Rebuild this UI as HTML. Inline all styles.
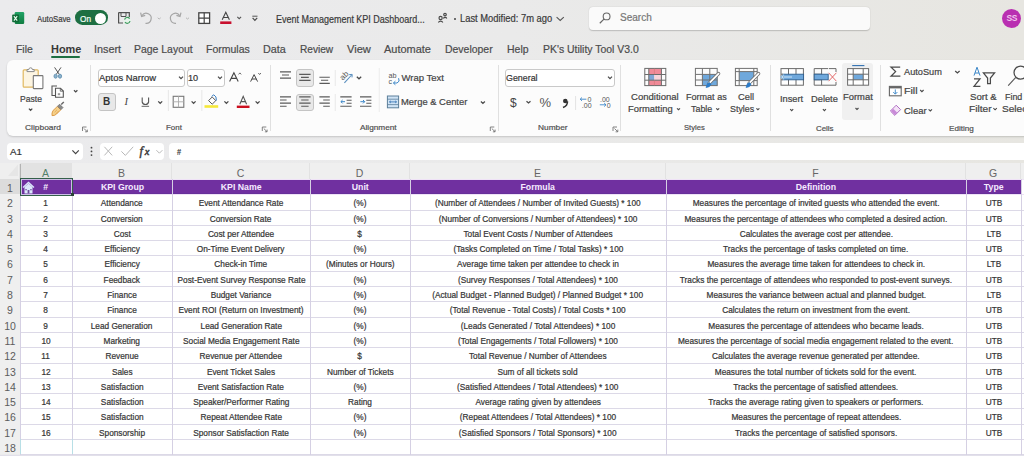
<!DOCTYPE html>
<html><head><meta charset="utf-8">
<style>
*{margin:0;padding:0;box-sizing:border-box}
html,body{width:1024px;height:456px;overflow:hidden;background:linear-gradient(90deg,#ebebed 0%,#eaeaea 50%,#e7e6e1 100%);font-family:"Liberation Sans",sans-serif;color:#333}
.a{position:absolute;white-space:nowrap;transform-origin:0 50%}
svg.a{overflow:visible}
#ribbon{position:absolute;left:6.5px;top:59.8px;width:1030px;height:76px;background:#fcfcfc;border-radius:6px;box-shadow:0 1px 2px rgba(0,0,0,.16)}
.sep{position:absolute;width:1px;background:#e0e0e0}
.box{position:absolute;background:#fff;border:1px solid #c9c9c9;border-radius:3px}
.fb{position:absolute;background:#fff;border-radius:4px}
.colhdr{position:absolute;left:0;width:1024px;background:#efefef}
.gbg{position:absolute;left:20px;top:179px;width:1004px;height:277px;background:#fff}
.ch{position:absolute;text-align:center;font-size:10.5px;color:#666;line-height:20px;border-right:1px solid #e2e2e2}
.ch.sel{background:#e2e2e2;color:#52806a}
.rh{position:absolute;left:0;width:20px;text-align:center;font-size:10.5px;color:#5c5c5c;background:#efefef;line-height:18px}
.rh.sel{background:#dcdcdc}
.c,.hd{position:absolute;text-align:center;font-size:9px;line-height:15px;white-space:nowrap}
.c{background:#fff;color:#333;-webkit-text-stroke:0.22px #3a3a3a}
.hd{background:#7030a0;box-shadow:inset 0 1px #66309a,inset 0 -1px #66309a;color:#f6ebff;font-weight:bold;font-size:9.5px}
.c span{display:inline-block;transform:translateY(1.6px) scaleX(.92)}
.hd span{display:inline-block;transform:translateY(-0.3px) scaleX(.92)}
.hl{position:absolute;left:20px;width:1004px;height:1px;background:#dcd9e7}
.vl{position:absolute;top:179px;width:1px;height:277px;background:#d5d0e3}
</style></head><body>
<!-- title bar shapes -->
<div class="a" style="left:75.1px;top:10.4px;width:33px;height:14.6px;border-radius:7.3px;background:#1d6f42"></div>
<div class="a" style="left:95px;top:13.2px;width:11px;height:11px;border-radius:50%;background:#fff"></div>
<div class="a" style="left:453.5px;top:17.5px;width:2.4px;height:2.4px;border-radius:50%;background:#444"></div>
<div class="a" style="left:589px;top:7px;width:281px;height:23px;background:#fafafa;border-radius:4px;box-shadow:0 0.5px 1.2px rgba(0,0,0,.2)"></div>
<div class="a" style="left:1002.2px;top:8.9px;width:19px;height:19px;border-radius:50%;background:#b92fb1;color:#f0c4ec;font-size:8.5px;font-weight:bold;letter-spacing:-0.4px;text-align:center;line-height:19.5px">SS</div>
<div class="a" style="left:51.2px;top:55.6px;width:29px;height:2.4px;background:#1d6f42;border-radius:1px"></div>
<!-- ribbon -->
<div id="ribbon"></div>
<div class="sep" style="left:90px;top:65px;height:66px"></div>
<div class="sep" style="left:269.5px;top:65px;height:66px"></div>
<div class="sep" style="left:497.5px;top:65px;height:66px"></div>
<div class="sep" style="left:620px;top:65px;height:66px"></div>
<div class="sep" style="left:769.5px;top:65px;height:66px"></div>
<div class="sep" style="left:879.5px;top:65px;height:66px"></div>
<div class="box" style="left:97.6px;top:68.6px;width:87.6px;height:18px"></div>
<div class="box" style="left:187px;top:68.6px;width:37.5px;height:18px"></div>
<div class="box" style="left:504.6px;top:68.5px;width:110px;height:18px"></div>
<div class="a" style="left:97.6px;top:93px;width:18px;height:18.3px;background:#e8e8e8;border:1px solid #c4c4c4;border-radius:3px"></div>
<div class="a" style="left:296px;top:69px;width:17.7px;height:17.5px;background:#e8e8e8;border:1px solid #c4c4c4;border-radius:3px"></div>
<div class="a" style="left:296px;top:93.5px;width:17.7px;height:17.5px;background:#e8e8e8;border:1px solid #c4c4c4;border-radius:3px"></div>
<div class="a" style="left:842.4px;top:63.4px;width:30.4px;height:57px;background:#f0f0f0;border-radius:3px"></div>
<!-- formula bar -->
<div class="fb" style="left:7.4px;top:143.3px;width:75.6px;height:16.4px"></div>
<div class="fb" style="left:100px;top:143.3px;width:63.7px;height:16.4px"></div>
<div class="fb" style="left:169px;top:143.3px;width:860px;height:16.4px"></div>
<!--FBTEXT-->
<svg class="a" style="left:0;top:0" width="1024" height="165" viewBox="0 0 1024 165">
<defs><linearGradient id="xg" x1="0" y1="0" x2="0" y2="1"><stop offset="0" stop-color="#21a366"/><stop offset="1" stop-color="#107c41"/></linearGradient></defs>
<!-- excel logo -->
<rect x="14.7" y="12" width="9.5" height="11.9" rx="1.2" fill="url(#xg)"/>
<rect x="12.2" y="14.6" width="6.8" height="7.6" rx="0.8" fill="#0e6b36"/>
<path d="M13.9 16.2 L17.2 20.6 M17.2 16.2 L13.9 20.6" stroke="#e8fff0" stroke-width="1.1"/>
<!-- save -->
<path d="M118.6 12.6 H129.3 V17 M118.6 12.6 V23 H123" fill="none" stroke="#505050" stroke-width="1.2"/>
<path d="M121 12.6 V16.5 H126 V12.6" fill="none" stroke="#505050" stroke-width="1"/>
<circle cx="127.3" cy="20.3" r="3.6" fill="#e6f3ea"/>
<path d="M124.6 19.6 A2.8 2.8 0 0 1 129.6 18.6 M130 21 A2.8 2.8 0 0 1 125 22.2" fill="none" stroke="#3f9a5e" stroke-width="1.2"/>
<!-- undo / redo -->
<path d="M142 15.6 A5 5 0 1 1 145.5 23.3" fill="none" stroke="#a6a6a6" stroke-width="1.2"/>
<path d="M140.6 12.6 L141.6 16.4 L145.2 15.4" fill="none" stroke="#a6a6a6" stroke-width="1.2"/>
<path d="M157.7 17.8 L159.2 19 L160.7 17.8" fill="none" stroke="#b0b0b0" stroke-width="0.9"/>
<path d="M179.6 15.6 A5 5 0 1 0 176 23.3" fill="none" stroke="#a6a6a6" stroke-width="1.2"/>
<path d="M181 12.6 L180 16.4 L176.4 15.4" fill="none" stroke="#a6a6a6" stroke-width="1.2"/>
<path d="M186 17.8 L187.5 19 L189 17.8" fill="none" stroke="#b0b0b0" stroke-width="0.9"/>
<!-- borders -->
<rect x="198.8" y="12.8" width="10.8" height="10.6" fill="#fff" stroke="#444" stroke-width="1.3"/>
<path d="M204.2 12.8 V23.4 M198.8 18.1 H209.6" stroke="#444" stroke-width="1.2"/>
<!-- font color -->
<path d="M222.2 19.8 L225.8 12.3 L229.4 19.8 M223.4 17.5 H228.2" fill="none" stroke="#444" stroke-width="1.1"/>
<rect x="220.2" y="21.4" width="11.2" height="2.6" fill="#c8102e"/>
<path d="M237.3 16.9 L239.2 18.7 L241.1 16.9" fill="none" stroke="#555" stroke-width="1.1"/>
<!-- customize -->
<path d="M252.3 16.2 H257.5" stroke="#555" stroke-width="1"/>
<path d="M252.6 17.8 L254.9 20.3 L257.2 17.8" fill="none" stroke="#4a4a4a" stroke-width="1.25"/>
<!-- person icon -->
<circle cx="440.6" cy="18" r="1.6" fill="none" stroke="#4a4a4a" stroke-width="1.15"/>
<path d="M438.4 22.5 A2.4 2.4 0 0 1 442.8 22.5" fill="none" stroke="#4a4a4a" stroke-width="1.15"/>
<circle cx="445" cy="14.6" r="1.3" fill="none" stroke="#4a4a4a" stroke-width="1.15"/>
<path d="M443.4 18.4 A1.9 1.9 0 0 1 446.8 18.4" fill="none" stroke="#4a4a4a" stroke-width="1.15"/>
<!-- title chevron -->
<path d="M556.6 17.2 L560.2 20.5 L563.8 17.2" fill="none" stroke="#555" stroke-width="1.1"/>
<!-- search magnifier -->
<circle cx="606.6" cy="16.4" r="3.4" fill="none" stroke="#666" stroke-width="1.1"/>
<path d="M604.2 18.9 L599.8 23.2" stroke="#666" stroke-width="1.2"/>
</svg>
<svg class="a" style="left:0;top:0" width="1024" height="165" viewBox="0 0 1024 165">
<!-- Paste -->
<rect x="23.2" y="69.8" width="15" height="17.4" rx="1" fill="#fdf5e2" stroke="#e0b860" stroke-width="1.2"/>
<path d="M27 71.6 V69.6 H28.8 A1.8 1.8 0 0 1 32.4 69.6 H34.2 V71.6 Z" fill="#fff" stroke="#8a8a8a" stroke-width="1"/>
<rect x="33.3" y="75.6" width="9.6" height="13" rx="0.6" fill="#fff" stroke="#777" stroke-width="1.1"/>
<path d="M28.9 108.6 L30.6 110.3 L32.3 108.6" fill="none" stroke="#4a4a4a" stroke-width="1.25"/>
<!-- scissors -->
<path d="M54.6 67.4 L59.2 74.2 M61 67.4 L56.4 74.2" stroke="#555" stroke-width="1"/>
<ellipse cx="55.6" cy="76.2" rx="1.6" ry="2" fill="#8fb4cc" stroke="#5f8fb0" stroke-width="0.9"/>
<ellipse cx="60" cy="76.2" rx="1.6" ry="2" fill="#8fb4cc" stroke="#5f8fb0" stroke-width="0.9"/>
<!-- copy -->
<path d="M57 86 H52 V95.5 H56" fill="none" stroke="#555" stroke-width="1.1"/>
<path d="M55.5 88.3 H60.5 L63.3 91 V97.2 H55.5 Z" fill="#fff" stroke="#555" stroke-width="1.1"/>
<path d="M60.3 88.3 V91.2 H63.3" fill="none" stroke="#555" stroke-width="0.8"/>
<rect x="57.8" y="93.2" width="2.4" height="2" fill="#999"/>
<path d="M74 90.2 L75.7 91.9 L77.4 90.2" fill="none" stroke="#4a4a4a" stroke-width="1.25"/>
<!-- format painter -->
<path d="M53 110.6 L57.4 106.4 L60.8 109.8 L56.6 114 Q54.4 116 52 115.6 Q51.6 113 53 110.6Z" fill="#f5d08a" stroke="#d9953e" stroke-width="0.9"/>
<path d="M54.6 112.2 L57 109.8 M56 113.6 L58.6 111" stroke="#d9953e" stroke-width="0.6"/>
<path d="M57.6 106.2 L59.6 104.2 L63 107.6 L61 109.6 Z" fill="#8a8a8a" stroke="#666" stroke-width="0.7"/>
<path d="M61.2 104.6 L63.8 102" stroke="#666" stroke-width="1.4"/>
<!-- launcher icons -->
<g fill="none" stroke="#666" stroke-width="0.8">
<path d="M82.5 131 V127 H86.5 M84 128.5 L87.2 131.7 M87.3 129.6 V131.8 H85.1"/>
<path d="M262.3 131 V127 H266.3 M263.8 128.5 L267 131.7 M267.1 129.6 V131.8 H264.9"/>
<path d="M490.3 131 V127 H494.3 M491.8 128.5 L495 131.7 M495.1 129.6 V131.8 H492.9"/>
<path d="M613 131 V127 H617 M614.5 128.5 L617.7 131.7 M617.8 129.6 V131.8 H615.6"/>
</g>
<!-- font box chevrons -->
<g fill="none" stroke="#4a4a4a" stroke-width="1.25">
<path d="M179 76.6 L181 78.6 L183 76.6"/>
<path d="M218 76.6 L220 78.6 L222 76.6"/>
<path d="M608 76.6 L610 78.6 L612 76.6"/>
</g>
<!-- grow/shrink font -->
<path d="M229.6 81.6 L233.9 72.8 L238.2 81.6 M231.2 78.4 H236.6" fill="none" stroke="#444" stroke-width="1.1"/>
<path d="M238.6 74.4 L239.9 72.9 L241.2 74.4" fill="none" stroke="#444" stroke-width="0.8"/>
<path d="M250.6 81.6 L254.1 74.6 L257.6 81.6 M251.9 79 H256.3" fill="none" stroke="#444" stroke-width="1"/>
<path d="M258.3 73 L259.6 74.5 L260.9 73" fill="none" stroke="#444" stroke-width="0.8"/>
<!-- B I U -->
<text x="106.6" y="104.8" font-family="Liberation Sans" font-weight="bold" font-size="10" fill="#333" text-anchor="middle">B</text>
<text x="126.2" y="104.8" font-family="Liberation Serif" font-style="italic" font-size="10.5" fill="#444" text-anchor="middle">I</text>
<path d="M142.2 97.4 V102 A3.3 3.3 0 0 0 148.6 102 V97.4" fill="none" stroke="#555" stroke-width="1.1"/>
<path d="M141.6 106.3 H149.1" stroke="#555" stroke-width="0.9"/>
<path d="M158.2 101.4 L160.2 103.3 L162.2 101.4" fill="none" stroke="#4a4a4a" stroke-width="1.25"/>
<!-- separators in font group -->
<path d="M168.4 90 V111 M201.8 90 V111" stroke="#e2e2e2" stroke-width="0.8"/>
<!-- borders -->
<rect x="173.2" y="96.3" width="10.6" height="11" fill="none" stroke="#777" stroke-width="1.1"/>
<path d="M178.5 96.3 V107.3 M173.2 101.8 H183.8" stroke="#aaa" stroke-width="0.9"/>
<path d="M191.6 101.4 L193.6 103.3 L195.6 101.4" fill="none" stroke="#4a4a4a" stroke-width="1.25"/>
<!-- fill color -->
<path d="M208.6 100.6 L212.2 97 L215.8 100.6 L212.2 104.2 Z" fill="#fff" stroke="#555" stroke-width="1"/>
<path d="M211.6 96.4 L213.8 94.8 Q216.8 96.2 216.4 100.6" fill="none" stroke="#3a7fc4" stroke-width="1"/>
<rect x="204.5" y="105.2" width="13.7" height="2.6" fill="#f5e83a"/>
<path d="M224.4 101.4 L226.4 103.3 L228.4 101.4" fill="none" stroke="#4a4a4a" stroke-width="1.25"/>
<!-- font color A -->
<path d="M239.8 104.2 L243.2 96.4 L246.6 104.2 M241 101.6 H245.4" fill="none" stroke="#555" stroke-width="1.1"/>
<rect x="236.8" y="105.6" width="12.7" height="2.4" fill="#cc1020"/>
<path d="M255.6 101.4 L257.6 103.3 L259.6 101.4" fill="none" stroke="#4a4a4a" stroke-width="1.25"/>
</svg>
<svg class="a" style="left:0;top:0" width="1024" height="165" viewBox="0 0 1024 165">
<g stroke="#5a5a5a" stroke-width="1.1" fill="none">
<!-- top align -->
<path d="M280 71.9 H291 M282 75 H289 M280 78.1 H291"/>
<!-- middle align -->
<path d="M299.2 74.4 H310.6 M301 77.4 H308.8 M299.2 80.4 H310.6"/>
<!-- bottom align -->
<path d="M319.4 77.2 H329.8 M321 80.3 H328.2 M319.4 83.4 H329.8"/>
<!-- left align -->
<path d="M280 96.9 H291 M280 100 H286.6 M280 103.1 H291 M280 106.2 H286.6"/>
<!-- center align -->
<path d="M299.2 96.9 H310.6 M301.2 100 H308.6 M299.2 103.1 H310.6 M301.2 106.2 H308.6"/>
<!-- right align -->
<path d="M319.4 96.9 H329.8 M323.2 100 H329.8 M319.4 103.1 H329.8 M323.2 106.2 H329.8"/>
</g>
<path d="M335.3 70 V86 M335.3 94 V111" stroke="#e4e4e4" stroke-width="0.8"/>
<!-- orientation -->
<text x="344" y="78.4" font-family="Liberation Sans" font-size="8" fill="#555" text-anchor="middle" transform="rotate(-45 344 75.6)">ab</text>
<path d="M344.4 82.8 L351.6 75" stroke="#5a8fbf" stroke-width="1.1"/>
<path d="M349.2 74.6 L352.2 74.4 L352 77.4" fill="none" stroke="#5a8fbf" stroke-width="1"/>
<path d="M356.8 76.7 L359 78.8 L361.2 76.7" fill="none" stroke="#4a4a4a" stroke-width="1.25"/>
<!-- decrease indent -->
<g stroke="#5a5a5a" stroke-width="1.1"><path d="M340.3 96.9 H351.6 M346.6 100.2 H351.6 M346.6 103.2 H351.6 M340.3 106.2 H351.6"/></g>
<path d="M345 101.7 H341 M342.6 100 L340.9 101.7 L342.6 103.4" fill="none" stroke="#3a86c8" stroke-width="1"/>
<!-- increase indent -->
<g stroke="#5a5a5a" stroke-width="1.1"><path d="M360 96.9 H371.4 M366.3 100.2 H371.4 M366.3 103.2 H371.4 M360 106.2 H371.4"/></g>
<path d="M360.4 101.7 H364.6 M363 100 L364.7 101.7 L363 103.4" fill="none" stroke="#3a86c8" stroke-width="1"/>
<!-- wrap text -->
<text x="388.6" y="77.6" font-family="Liberation Sans" font-size="7.2" fill="#555">ab</text>
<text x="388.4" y="84" font-family="Liberation Sans" font-size="7.2" fill="#555">c</text>
<path d="M398.6 78.2 Q400.4 81.6 397 83 H393.6 M395.4 81.2 L393.4 83 L395.4 84.8" fill="none" stroke="#3a86c8" stroke-width="1"/>
<!-- merge & center -->
<rect x="387.4" y="96" width="11.2" height="11.8" fill="#cfe3f5" stroke="#5c7f9a" stroke-width="1"/>
<path d="M387.4 99.2 H398.6 M387.4 104.6 H398.6" stroke="#5c7f9a" stroke-width="0.8"/>
<path d="M389.5 101.9 H396.5 M390.8 100.9 L389.5 101.9 L390.8 102.9 M395.2 100.9 L396.5 101.9 L395.2 102.9" fill="none" stroke="#2f6fb0" stroke-width="0.8"/>
<path d="M480.9 101.5 L482.9 103.4 L484.9 101.5" fill="none" stroke="#4a4a4a" stroke-width="1.25"/>
<!-- number -->
<text x="513.4" y="106.6" font-family="Liberation Sans" font-size="12" fill="#444" text-anchor="middle">$</text>
<path d="M526.5 101.2 L528.5 103 L530.5 101.2" fill="none" stroke="#4a4a4a" stroke-width="1.25"/>
<text x="545.2" y="107.4" font-family="Liberation Sans" font-size="13" fill="#555" text-anchor="middle">%</text>
<circle cx="565.3" cy="101" r="2.3" fill="#333"/>
<path d="M567.4 101.4 Q567.8 105.6 563 107.6" fill="none" stroke="#333" stroke-width="1.6"/>
<path d="M379.3 68 V112" stroke="#e8e8e8" stroke-width="0.8"/>
<path d="M575.6 96 V110" stroke="#dcdcdc" stroke-width="0.8"/>
<!-- decrease decimal -->
<path d="M586.4 99.2 H580.2 M582 97.5 L580.2 99.2 L582 100.9" fill="none" stroke="#3a86c8" stroke-width="0.9"/>
<text x="587.6" y="101.8" font-family="Liberation Sans" font-size="7" fill="#555">0</text>
<text x="581.8" y="108" font-family="Liberation Sans" font-size="7" fill="#555">.00</text>
<!-- increase decimal -->
<text x="600" y="101.8" font-family="Liberation Sans" font-size="7" fill="#555">.00</text>
<path d="M599.8 104.8 H606 M604.2 103.1 L606 104.8 L604.2 106.5" fill="none" stroke="#3a86c8" stroke-width="0.9"/>
<text x="606.8" y="108" font-family="Liberation Sans" font-size="7" fill="#555">0</text>
</svg>
<svg class="a" style="left:0;top:0" width="1024" height="165" viewBox="0 0 1024 165">
<!-- conditional formatting -->
<rect x="648.8" y="68.6" width="12.6" height="5.9" fill="#f08a98"/>
<rect x="648.8" y="74.5" width="5.6" height="5.7" fill="#7ea6d6"/>
<rect x="654.4" y="74.5" width="7" height="5.7" fill="#f9d4da"/>
<rect x="648.8" y="80.2" width="12.6" height="5.5" fill="#f08a98"/>
<g fill="none" stroke="#6b6b6b" stroke-width="1">
<rect x="644.8" y="68.4" width="21" height="17.2"/>
<path d="M648.8 68.4 V85.6 M661.4 68.4 V85.6 M644.8 74.5 H665.8 M644.8 80.2 H665.8"/>
</g>
<path d="M654.4 68.4 V74.5 M654.4 80.2 V85.6" stroke="#c77" stroke-width="0.6"/>
<!-- format as table -->
<rect x="702.4" y="74.4" width="15" height="11.2" fill="#6fa8dc"/>
<g fill="none" stroke="#707070" stroke-width="1">
<rect x="695.4" y="68.4" width="21.8" height="17.2"/>
<path d="M702.4 68.4 V85.6 M709.8 68.4 V85.6 M695.4 74.4 H717.2 M695.4 80 H717.2"/>
</g>
<path d="M718.6 73.6 L709 83.4" stroke="#6c6c6c" stroke-width="3.4" stroke-linecap="round"/>
<path d="M718.6 73.6 L709 83.4" stroke="#fff" stroke-width="1.8" stroke-linecap="round"/>
<path d="M709.6 82.6 Q706.6 83.2 706 87.6 Q710 87.4 711 84.2Z" fill="#2b7bc8" stroke="#2b7bc8" stroke-width="0.6"/>
<!-- cell styles -->
<rect x="739.2" y="71.6" width="14.6" height="9" fill="#6fa8dc"/>
<g fill="none" stroke="#707070" stroke-width="1">
<rect x="735.4" y="68.4" width="21.8" height="17.2"/>
<path d="M739.2 68.4 V85.6 M753.8 68.4 V85.6 M735.4 71.6 H757.2 M735.4 80.6 H757.2"/>
</g>
<path d="M758.6 73.6 L749 83.4" stroke="#6c6c6c" stroke-width="3.4" stroke-linecap="round"/>
<path d="M758.6 73.6 L749 83.4" stroke="#fff" stroke-width="1.8" stroke-linecap="round"/>
<path d="M749.6 82.6 Q746.6 83.2 746 87.6 Q750 87.4 751 84.2Z" fill="#2b7bc8" stroke="#2b7bc8" stroke-width="0.6"/>
<!-- styles chevrons -->
<g fill="none" stroke="#4a4a4a" stroke-width="1.15">
<path d="M677 108.3 L678.5 109.7 L680 108.3"/>
<path d="M716.2 108.3 L717.7 109.7 L719.2 108.3"/>
<path d="M756.4 108.3 L757.9 109.7 L759.4 108.3"/>
</g>
<!-- insert cells -->
<rect x="781" y="68.6" width="22.4" height="16.6" fill="#fff" stroke="#6b6b6b" stroke-width="1"/>
<path d="M788.5 68.6 V85.2 M796 68.6 V85.2" stroke="#6b6b6b" stroke-width="1"/>
<rect x="783" y="74.2" width="20.6" height="5.6" fill="#6fa8dc" stroke="#2f5f8f" stroke-width="0.9"/>
<path d="M781 74.2 H783 M781 79.8 H783" stroke="#6b6b6b"/>
<path d="M792 77 H781.2 M784 74.6 L781 77 L784 79.4" fill="none" stroke="#cfe6f8" stroke-width="1.2"/>
<path d="M784.2 74.2 L780.6 77 L784.2 79.8" fill="none" stroke="#5a9ad0" stroke-width="0.7"/>
<!-- delete cells -->
<path d="M828.2 68.6 H814.2 V85.2 H829 M814.2 74.2 H822 M814.2 79.8 H822" fill="none" stroke="#6b6b6b" stroke-width="1"/>
<path d="M821.6 68.6 V85.2 M829 68.6 H836 V72 M836 82 V85.2 H829" fill="none" stroke="#6b6b6b" stroke-width="1"/>
<rect x="814.2" y="74.2" width="14" height="5.6" fill="#6fa8dc" stroke="#2f5f8f" stroke-width="0.9"/>
<path d="M828.6 72.8 L836.4 81.2 M836.4 72.8 L828.6 81.2" stroke="#e05a5a" stroke-width="0.9"/>
<!-- format cells -->
<rect x="847.6" y="68.6" width="21" height="16.6" fill="#fff" stroke="#6b6b6b" stroke-width="1"/>
<rect x="853.2" y="74.2" width="10" height="5.6" fill="#6fa8dc"/>
<path d="M853.2 68.6 V85.2 M863.2 68.6 V85.2 M847.6 74.2 H868.6 M847.6 79.8 H868.6" stroke="#6b6b6b" stroke-width="1"/>
<path d="M852.2 65.6 H864.4" stroke="#2f6fb0" stroke-width="1.1"/>
<g fill="none" stroke="#4a4a4a" stroke-width="1.15">
<path d="M790.2 109.2 L791.7 110.6 L793.2 109.2"/>
<path d="M822.9 109.2 L824.4 110.6 L825.9 109.2"/>
<path d="M855.5 108 L857 109.4 L858.5 108"/>
</g>
<!-- autosum -->
<path d="M900.2 67.2 H891 L895.6 71.6 L891 76.2 H900.4" fill="none" stroke="#4a4a4a" stroke-width="1.25"/>
<path d="M955.2 71 L957.4 73 L959.6 71" fill="none" stroke="#4a4a4a" stroke-width="1.25"/>
<!-- fill -->
<rect x="889.4" y="86.4" width="11.8" height="9.4" fill="#fff" stroke="#666" stroke-width="1.1"/>
<path d="M889.4 87.6 H901.2" stroke="#666" stroke-width="1.6"/>
<path d="M895.3 89.4 V94 M893.2 92 L895.3 94.2 L897.4 92" fill="none" stroke="#3a86c8" stroke-width="0.9"/>
<path d="M920.2 90 L921.9 91.6 L923.6 90" fill="none" stroke="#4a4a4a" stroke-width="1.15"/>
<!-- clear -->
<path d="M890.4 111 L896.2 105.2 L900.6 109.6 L894.8 115.4 Z" fill="#f3e2f6" stroke="#b070c4" stroke-width="1"/>
<path d="M890.9 111 L893.2 108.7 L897.1 112.6 L894.8 114.9 Z" fill="#c98ad8"/>
<path d="M928.6 109.3 L930.3 110.9 L932 109.3" fill="none" stroke="#4a4a4a" stroke-width="1.15"/>
<!-- sort & filter -->
<path d="M974 75.6 L977 67.2 L980 75.6 M975 73 H979" fill="none" stroke="#3a86c8" stroke-width="1"/>
<path d="M974 78.8 H980 L974 86.4 H980.4" fill="none" stroke="#4a4a4a" stroke-width="1.25"/>
<path d="M983.4 72.8 H994.6 L990.4 78 V83.6 L987.6 83.6 V78 Z" fill="none" stroke="#4a4a4a" stroke-width="1.25"/>
<path d="M993.4 108.2 L995.1 109.8 L996.8 108.2" fill="none" stroke="#4a4a4a" stroke-width="1.15"/>
<!-- find -->
<circle cx="1020.6" cy="72.6" r="6.6" fill="none" stroke="#4a4a4a" stroke-width="1.25"/>
<path d="M1015.8 77.4 L1008.2 85.6" stroke="#555" stroke-width="1.1"/>
</svg>
<svg class="a" style="left:0;top:0" width="1024" height="165" viewBox="0 0 1024 165">
<path d="M72.4 150.4 L75.6 153.6 L78.8 150.4" fill="none" stroke="#444" stroke-width="1.2"/>
<circle cx="91.5" cy="147.7" r="0.9" fill="#444"/><circle cx="91.5" cy="151.4" r="0.9" fill="#444"/><circle cx="91.5" cy="155.1" r="0.9" fill="#444"/>
<path d="M104.4 146.8 L112.2 155.4 M112.2 146.8 L104.4 155.4" stroke="#b8b8b8" stroke-width="1"/>
<path d="M121.4 151.4 L125.4 155.4 L133.2 146.8" fill="none" stroke="#b8b8b8" stroke-width="1"/>
<text x="139.6" y="155" font-family="Liberation Serif" font-style="italic" font-size="12.5" fill="#3a3a3a" stroke="#3a3a3a" stroke-width="0.45">f</text>
<text x="144.8" y="155" font-family="Liberation Serif" font-style="italic" font-size="10.5" fill="#3a3a3a" stroke="#3a3a3a" stroke-width="0.45">x</text>
<path d="M156.4 150.2 L159.4 153.2 L162.4 150.2" fill="none" stroke="#b0b0b0" stroke-width="0.9"/>
</svg>

<div class="a" style="left:36.83px;top:11.70px;line-height:14px;font-size:8.5px;color:#3c3c3c;font-weight:normal;transform:scaleX(0.914);-webkit-text-stroke:0.2px currentColor">AutoSave</div>
<div class="a" style="left:80.11px;top:11.70px;line-height:14px;font-size:9px;color:#f4fff8;font-weight:normal;transform:scaleX(0.914);-webkit-text-stroke:0.2px currentColor">On</div>
<div class="a" style="left:276.26px;top:12.60px;line-height:14px;font-size:10px;color:#3a3a3a;font-weight:normal;transform:scaleX(0.898);-webkit-text-stroke:0.2px currentColor">Event Management KPI Dashboard...</div>
<div class="a" style="left:460.44px;top:12.40px;line-height:14px;font-size:10px;color:#3a3a3a;font-weight:normal;transform:scaleX(0.937);-webkit-text-stroke:0.2px currentColor">Last Modified: 7m ago</div>
<div class="a" style="left:619.80px;top:10.80px;line-height:14px;font-size:10px;color:#777777;font-weight:normal;transform:scaleX(1.004);-webkit-text-stroke:0.2px currentColor">Search</div>
<div class="a" style="left:15.78px;top:42.00px;line-height:14px;font-size:10.5px;color:#4c4c4c;font-weight:normal;transform:scaleX(0.990);-webkit-text-stroke:0.2px currentColor">File</div>
<div class="a" style="left:50.54px;top:42.00px;line-height:14px;font-size:10.5px;color:#383838;font-weight:bold;transform:scaleX(1.040)">Home</div>
<div class="a" style="left:93.75px;top:42.00px;line-height:14px;font-size:10.5px;color:#4c4c4c;font-weight:normal;transform:scaleX(1.030);-webkit-text-stroke:0.2px currentColor">Insert</div>
<div class="a" style="left:134.37px;top:42.00px;line-height:14px;font-size:10.5px;color:#4c4c4c;font-weight:normal;transform:scaleX(0.995);-webkit-text-stroke:0.2px currentColor">Page Layout</div>
<div class="a" style="left:205.97px;top:42.00px;line-height:14px;font-size:10.5px;color:#4c4c4c;font-weight:normal;transform:scaleX(1.000);-webkit-text-stroke:0.2px currentColor">Formulas</div>
<div class="a" style="left:263.35px;top:42.00px;line-height:14px;font-size:10.5px;color:#4c4c4c;font-weight:normal;transform:scaleX(1.026);-webkit-text-stroke:0.2px currentColor">Data</div>
<div class="a" style="left:300.39px;top:42.00px;line-height:14px;font-size:10.5px;color:#4c4c4c;font-weight:normal;transform:scaleX(0.963);-webkit-text-stroke:0.2px currentColor">Review</div>
<div class="a" style="left:347.03px;top:42.00px;line-height:14px;font-size:10.5px;color:#4c4c4c;font-weight:normal;transform:scaleX(1.057);-webkit-text-stroke:0.2px currentColor">View</div>
<div class="a" style="left:384.14px;top:42.00px;line-height:14px;font-size:10.5px;color:#4c4c4c;font-weight:normal;transform:scaleX(1.045);-webkit-text-stroke:0.2px currentColor">Automate</div>
<div class="a" style="left:444.77px;top:42.00px;line-height:14px;font-size:10.5px;color:#4c4c4c;font-weight:normal;transform:scaleX(0.996);-webkit-text-stroke:0.2px currentColor">Developer</div>
<div class="a" style="left:506.57px;top:42.00px;line-height:14px;font-size:10.5px;color:#4c4c4c;font-weight:normal;transform:scaleX(0.998);-webkit-text-stroke:0.2px currentColor">Help</div>
<div class="a" style="left:542.67px;top:42.00px;line-height:14px;font-size:10.5px;color:#4c4c4c;font-weight:normal;transform:scaleX(0.994);-webkit-text-stroke:0.2px currentColor">PK's Utility Tool V3.0</div>
<div class="a" style="left:25.30px;top:121.00px;line-height:14px;font-size:8px;color:#505050;font-weight:normal;transform:scaleX(1.050);-webkit-text-stroke:0.2px currentColor">Clipboard</div>
<div class="a" style="left:166.12px;top:121.00px;line-height:14px;font-size:8px;color:#505050;font-weight:normal;transform:scaleX(0.990);-webkit-text-stroke:0.2px currentColor">Font</div>
<div class="a" style="left:359.51px;top:121.00px;line-height:14px;font-size:8px;color:#505050;font-weight:normal;transform:scaleX(1.030);-webkit-text-stroke:0.2px currentColor">Alignment</div>
<div class="a" style="left:538.10px;top:121.00px;line-height:14px;font-size:8px;color:#505050;font-weight:normal;transform:scaleX(1.039);-webkit-text-stroke:0.2px currentColor">Number</div>
<div class="a" style="left:684.44px;top:121.30px;line-height:14px;font-size:8px;color:#505050;font-weight:normal;transform:scaleX(0.952);-webkit-text-stroke:0.2px currentColor">Styles</div>
<div class="a" style="left:816.13px;top:121.50px;line-height:14px;font-size:8px;color:#505050;font-weight:normal;transform:scaleX(0.988);-webkit-text-stroke:0.2px currentColor">Cells</div>
<div class="a" style="left:949.11px;top:121.50px;line-height:14px;font-size:8px;color:#505050;font-weight:normal;transform:scaleX(1.016);-webkit-text-stroke:0.2px currentColor">Editing</div>
<div class="a" style="left:20.09px;top:91.70px;line-height:14px;font-size:9px;color:#444;font-weight:normal;transform:scaleX(0.951);-webkit-text-stroke:0.2px currentColor">Paste</div>
<div class="a" style="left:98.93px;top:70.60px;line-height:14px;font-size:9.5px;color:#333;font-weight:normal;transform:scaleX(0.993);-webkit-text-stroke:0.2px currentColor">Aptos Narrow</div>
<div class="a" style="left:188.45px;top:70.60px;line-height:14px;font-size:9.5px;color:#333;font-weight:normal;transform:scaleX(0.959);-webkit-text-stroke:0.2px currentColor">10</div>
<div class="a" style="left:401.43px;top:71.30px;line-height:14px;font-size:9.5px;color:#444;font-weight:normal;transform:scaleX(1.000);-webkit-text-stroke:0.2px currentColor">Wrap Text</div>
<div class="a" style="left:401.44px;top:95.40px;line-height:14px;font-size:9.5px;color:#444;font-weight:normal;transform:scaleX(0.989);-webkit-text-stroke:0.2px currentColor">Merge &amp; Center</div>
<div class="a" style="left:506.47px;top:70.50px;line-height:14px;font-size:9.5px;color:#333;font-weight:normal;transform:scaleX(0.933);-webkit-text-stroke:0.2px currentColor">General</div>
<div class="a" style="left:631.13px;top:90.20px;line-height:14px;font-size:9px;color:#444;font-weight:normal;transform:scaleX(1.059);-webkit-text-stroke:0.2px currentColor">Conditional</div>
<div class="a" style="left:628.24px;top:102.20px;line-height:14px;font-size:9px;color:#444;font-weight:normal;transform:scaleX(1.039);-webkit-text-stroke:0.2px currentColor">Formatting</div>
<div class="a" style="left:685.66px;top:90.20px;line-height:14px;font-size:9px;color:#444;font-weight:normal;transform:scaleX(1.004);-webkit-text-stroke:0.2px currentColor">Format as</div>
<div class="a" style="left:691.27px;top:102.20px;line-height:14px;font-size:9px;color:#444;font-weight:normal;transform:scaleX(0.989);-webkit-text-stroke:0.2px currentColor">Table</div>
<div class="a" style="left:738.04px;top:90.20px;line-height:14px;font-size:9px;color:#444;font-weight:normal;transform:scaleX(1.036);-webkit-text-stroke:0.2px currentColor">Cell</div>
<div class="a" style="left:729.67px;top:102.20px;line-height:14px;font-size:9px;color:#444;font-weight:normal;transform:scaleX(0.986);-webkit-text-stroke:0.2px currentColor">Styles</div>
<div class="a" style="left:780.14px;top:91.80px;line-height:14px;font-size:9px;color:#444;font-weight:normal;transform:scaleX(1.030);-webkit-text-stroke:0.2px currentColor">Insert</div>
<div class="a" style="left:811.44px;top:91.80px;line-height:14px;font-size:9px;color:#444;font-weight:normal;transform:scaleX(1.033);-webkit-text-stroke:0.2px currentColor">Delete</div>
<div class="a" style="left:842.74px;top:90.00px;line-height:14px;font-size:9px;color:#444;font-weight:normal;transform:scaleX(1.044);-webkit-text-stroke:0.2px currentColor">Format</div>
<div class="a" style="left:903.95px;top:65.20px;line-height:14px;font-size:9px;color:#444;font-weight:normal;transform:scaleX(1.023);-webkit-text-stroke:0.2px currentColor">AutoSum</div>
<div class="a" style="left:903.86px;top:84.40px;line-height:14px;font-size:9px;color:#444;font-weight:normal;transform:scaleX(1.181);-webkit-text-stroke:0.2px currentColor">Fill</div>
<div class="a" style="left:903.93px;top:103.90px;line-height:14px;font-size:9px;color:#444;font-weight:normal;transform:scaleX(1.049);-webkit-text-stroke:0.2px currentColor">Clear</div>
<div class="a" style="left:970.22px;top:90.40px;line-height:14px;font-size:9px;color:#444;font-weight:normal;transform:scaleX(1.071);-webkit-text-stroke:0.2px currentColor">Sort &amp;</div>
<div class="a" style="left:968.89px;top:102.40px;line-height:14px;font-size:9px;color:#444;font-weight:normal;transform:scaleX(1.129);-webkit-text-stroke:0.2px currentColor">Filter</div>
<div class="a" style="left:1005.27px;top:90.40px;line-height:14px;font-size:9px;color:#444;font-weight:normal;transform:scaleX(0.987);-webkit-text-stroke:0.2px currentColor">Find</div>
<div class="a" style="left:1002.39px;top:102.40px;line-height:14px;font-size:9px;color:#444;font-weight:normal;transform:scaleX(1.122);-webkit-text-stroke:0.2px currentColor">Select</div>
<div class="a" style="left:10.11px;top:144.50px;line-height:14px;font-size:9.5px;color:#333;font-weight:normal;transform:scaleX(1.027);-webkit-text-stroke:0.2px currentColor">A1</div>
<div class="a" style="left:176.56px;top:144.50px;line-height:14px;font-size:9px;color:#333;font-weight:normal;transform:scaleX(0.813);-webkit-text-stroke:0.2px currentColor">#</div>
<div id="grid">
<div class="gbg"></div>
<div class="colhdr" style="top:163.3px;height:15.659999999999997px"></div>
<div class="ch sel" style="left:20px;width:52px;top:163.3px;height:15.659999999999997px">A</div>
<div class="ch" style="left:72px;width:100px;top:163.3px;height:15.659999999999997px">B</div>
<div class="ch" style="left:172px;width:138px;top:163.3px;height:15.659999999999997px">C</div>
<div class="ch" style="left:310px;width:100px;top:163.3px;height:15.659999999999997px">D</div>
<div class="ch" style="left:410px;width:256px;top:163.3px;height:15.659999999999997px">E</div>
<div class="ch" style="left:666px;width:300px;top:163.3px;height:15.659999999999997px">F</div>
<div class="ch" style="left:966px;width:55px;top:163.3px;height:15.659999999999997px">G</div>
<div class="rh sel" style="top:178.96px;height:15.30px">1</div>
<div class="hd" style="left:20px;width:52px;top:178.96px;height:15.30px"><span>#</span></div>
<div class="hd" style="left:72px;width:100px;top:178.96px;height:15.30px"><span>KPI Group</span></div>
<div class="hd" style="left:172px;width:138px;top:178.96px;height:15.30px"><span>KPI Name</span></div>
<div class="hd" style="left:310px;width:100px;top:178.96px;height:15.30px"><span>Unit</span></div>
<div class="hd" style="left:410px;width:256px;top:178.96px;height:15.30px"><span>Formula</span></div>
<div class="hd" style="left:666px;width:300px;top:178.96px;height:15.30px"><span>Definition</span></div>
<div class="hd" style="left:966px;width:55px;top:178.96px;height:15.30px"><span>Type</span></div>
<div class="rh" style="top:194.26px;height:15.30px">2</div>
<div class="c" style="left:20px;width:52px;top:194.26px;height:15.30px"><span>1</span></div>
<div class="c" style="left:72px;width:100px;top:194.26px;height:15.30px"><span>Attendance</span></div>
<div class="c" style="left:172px;width:138px;top:194.26px;height:15.30px"><span>Event Attendance Rate</span></div>
<div class="c" style="left:310px;width:100px;top:194.26px;height:15.30px"><span>(%)</span></div>
<div class="c" style="left:410px;width:256px;top:194.26px;height:15.30px"><span>(Number of Attendees / Number of Invited Guests) * 100</span></div>
<div class="c" style="left:666px;width:300px;top:194.26px;height:15.30px"><span>Measures the percentage of invited guests who attended the event.</span></div>
<div class="c" style="left:966px;width:55px;top:194.26px;height:15.30px"><span>UTB</span></div>
<div class="rh" style="top:209.55px;height:15.30px">3</div>
<div class="c" style="left:20px;width:52px;top:209.55px;height:15.30px"><span>2</span></div>
<div class="c" style="left:72px;width:100px;top:209.55px;height:15.30px"><span>Conversion</span></div>
<div class="c" style="left:172px;width:138px;top:209.55px;height:15.30px"><span>Conversion Rate</span></div>
<div class="c" style="left:310px;width:100px;top:209.55px;height:15.30px"><span>(%)</span></div>
<div class="c" style="left:410px;width:256px;top:209.55px;height:15.30px"><span>(Number of Conversions / Number of Attendees) * 100</span></div>
<div class="c" style="left:666px;width:300px;top:209.55px;height:15.30px"><span>Measures the percentage of attendees who completed a desired action.</span></div>
<div class="c" style="left:966px;width:55px;top:209.55px;height:15.30px"><span>UTB</span></div>
<div class="rh" style="top:224.85px;height:15.30px">4</div>
<div class="c" style="left:20px;width:52px;top:224.85px;height:15.30px"><span>3</span></div>
<div class="c" style="left:72px;width:100px;top:224.85px;height:15.30px"><span>Cost</span></div>
<div class="c" style="left:172px;width:138px;top:224.85px;height:15.30px"><span>Cost per Attendee</span></div>
<div class="c" style="left:310px;width:100px;top:224.85px;height:15.30px"><span>$</span></div>
<div class="c" style="left:410px;width:256px;top:224.85px;height:15.30px"><span>Total Event Costs / Number of Attendees</span></div>
<div class="c" style="left:666px;width:300px;top:224.85px;height:15.30px"><span>Calculates the average cost per attendee.</span></div>
<div class="c" style="left:966px;width:55px;top:224.85px;height:15.30px"><span>LTB</span></div>
<div class="rh" style="top:240.14px;height:15.30px">5</div>
<div class="c" style="left:20px;width:52px;top:240.14px;height:15.30px"><span>4</span></div>
<div class="c" style="left:72px;width:100px;top:240.14px;height:15.30px"><span>Efficiency</span></div>
<div class="c" style="left:172px;width:138px;top:240.14px;height:15.30px"><span>On-Time Event Delivery</span></div>
<div class="c" style="left:310px;width:100px;top:240.14px;height:15.30px"><span>(%)</span></div>
<div class="c" style="left:410px;width:256px;top:240.14px;height:15.30px"><span>(Tasks Completed on Time / Total Tasks) * 100</span></div>
<div class="c" style="left:666px;width:300px;top:240.14px;height:15.30px"><span>Tracks the percentage of tasks completed on time.</span></div>
<div class="c" style="left:966px;width:55px;top:240.14px;height:15.30px"><span>UTB</span></div>
<div class="rh" style="top:255.44px;height:15.30px">6</div>
<div class="c" style="left:20px;width:52px;top:255.44px;height:15.30px"><span>5</span></div>
<div class="c" style="left:72px;width:100px;top:255.44px;height:15.30px"><span>Efficiency</span></div>
<div class="c" style="left:172px;width:138px;top:255.44px;height:15.30px"><span>Check-in Time</span></div>
<div class="c" style="left:310px;width:100px;top:255.44px;height:15.30px"><span>(Minutes or Hours)</span></div>
<div class="c" style="left:410px;width:256px;top:255.44px;height:15.30px"><span>Average time taken per attendee to check in</span></div>
<div class="c" style="left:666px;width:300px;top:255.44px;height:15.30px"><span>Measures the average time taken for attendees to check in.</span></div>
<div class="c" style="left:966px;width:55px;top:255.44px;height:15.30px"><span>LTB</span></div>
<div class="rh" style="top:270.74px;height:15.30px">7</div>
<div class="c" style="left:20px;width:52px;top:270.74px;height:15.30px"><span>6</span></div>
<div class="c" style="left:72px;width:100px;top:270.74px;height:15.30px"><span>Feedback</span></div>
<div class="c" style="left:172px;width:138px;top:270.74px;height:15.30px"><span>Post-Event Survey Response Rate</span></div>
<div class="c" style="left:310px;width:100px;top:270.74px;height:15.30px"><span>(%)</span></div>
<div class="c" style="left:410px;width:256px;top:270.74px;height:15.30px"><span>(Survey Responses / Total Attendees) * 100</span></div>
<div class="c" style="left:666px;width:300px;top:270.74px;height:15.30px"><span>Tracks the percentage of attendees who responded to post-event surveys.</span></div>
<div class="c" style="left:966px;width:55px;top:270.74px;height:15.30px"><span>UTB</span></div>
<div class="rh" style="top:286.03px;height:15.30px">8</div>
<div class="c" style="left:20px;width:52px;top:286.03px;height:15.30px"><span>7</span></div>
<div class="c" style="left:72px;width:100px;top:286.03px;height:15.30px"><span>Finance</span></div>
<div class="c" style="left:172px;width:138px;top:286.03px;height:15.30px"><span>Budget Variance</span></div>
<div class="c" style="left:310px;width:100px;top:286.03px;height:15.30px"><span>(%)</span></div>
<div class="c" style="left:410px;width:256px;top:286.03px;height:15.30px"><span>(Actual Budget - Planned Budget) / Planned Budget * 100</span></div>
<div class="c" style="left:666px;width:300px;top:286.03px;height:15.30px"><span>Measures the variance between actual and planned budget.</span></div>
<div class="c" style="left:966px;width:55px;top:286.03px;height:15.30px"><span>LTB</span></div>
<div class="rh" style="top:301.33px;height:15.30px">9</div>
<div class="c" style="left:20px;width:52px;top:301.33px;height:15.30px"><span>8</span></div>
<div class="c" style="left:72px;width:100px;top:301.33px;height:15.30px"><span>Finance</span></div>
<div class="c" style="left:172px;width:138px;top:301.33px;height:15.30px"><span>Event ROI (Return on Investment)</span></div>
<div class="c" style="left:310px;width:100px;top:301.33px;height:15.30px"><span>(%)</span></div>
<div class="c" style="left:410px;width:256px;top:301.33px;height:15.30px"><span>(Total Revenue - Total Costs) / Total Costs * 100</span></div>
<div class="c" style="left:666px;width:300px;top:301.33px;height:15.30px"><span>Calculates the return on investment from the event.</span></div>
<div class="c" style="left:966px;width:55px;top:301.33px;height:15.30px"><span>UTB</span></div>
<div class="rh" style="top:316.62px;height:15.30px">10</div>
<div class="c" style="left:20px;width:52px;top:316.62px;height:15.30px"><span>9</span></div>
<div class="c" style="left:72px;width:100px;top:316.62px;height:15.30px"><span>Lead Generation</span></div>
<div class="c" style="left:172px;width:138px;top:316.62px;height:15.30px"><span>Lead Generation Rate</span></div>
<div class="c" style="left:310px;width:100px;top:316.62px;height:15.30px"><span>(%)</span></div>
<div class="c" style="left:410px;width:256px;top:316.62px;height:15.30px"><span>(Leads Generated / Total Attendees) * 100</span></div>
<div class="c" style="left:666px;width:300px;top:316.62px;height:15.30px"><span>Measures the percentage of attendees who became leads.</span></div>
<div class="c" style="left:966px;width:55px;top:316.62px;height:15.30px"><span>UTB</span></div>
<div class="rh" style="top:331.92px;height:15.30px">11</div>
<div class="c" style="left:20px;width:52px;top:331.92px;height:15.30px"><span>10</span></div>
<div class="c" style="left:72px;width:100px;top:331.92px;height:15.30px"><span>Marketing</span></div>
<div class="c" style="left:172px;width:138px;top:331.92px;height:15.30px"><span>Social Media Engagement Rate</span></div>
<div class="c" style="left:310px;width:100px;top:331.92px;height:15.30px"><span>(%)</span></div>
<div class="c" style="left:410px;width:256px;top:331.92px;height:15.30px"><span>(Total Engagements / Total Followers) * 100</span></div>
<div class="c" style="left:666px;width:300px;top:331.92px;height:15.30px"><span>Measures the percentage of social media engagement related to the event.</span></div>
<div class="c" style="left:966px;width:55px;top:331.92px;height:15.30px"><span>UTB</span></div>
<div class="rh" style="top:347.22px;height:15.30px">12</div>
<div class="c" style="left:20px;width:52px;top:347.22px;height:15.30px"><span>11</span></div>
<div class="c" style="left:72px;width:100px;top:347.22px;height:15.30px"><span>Revenue</span></div>
<div class="c" style="left:172px;width:138px;top:347.22px;height:15.30px"><span>Revenue per Attendee</span></div>
<div class="c" style="left:310px;width:100px;top:347.22px;height:15.30px"><span>$</span></div>
<div class="c" style="left:410px;width:256px;top:347.22px;height:15.30px"><span>Total Revenue / Number of Attendees</span></div>
<div class="c" style="left:666px;width:300px;top:347.22px;height:15.30px"><span>Calculates the average revenue generated per attendee.</span></div>
<div class="c" style="left:966px;width:55px;top:347.22px;height:15.30px"><span>UTB</span></div>
<div class="rh" style="top:362.51px;height:15.30px">13</div>
<div class="c" style="left:20px;width:52px;top:362.51px;height:15.30px"><span>12</span></div>
<div class="c" style="left:72px;width:100px;top:362.51px;height:15.30px"><span>Sales</span></div>
<div class="c" style="left:172px;width:138px;top:362.51px;height:15.30px"><span>Event Ticket Sales</span></div>
<div class="c" style="left:310px;width:100px;top:362.51px;height:15.30px"><span>Number of Tickets</span></div>
<div class="c" style="left:410px;width:256px;top:362.51px;height:15.30px"><span>Sum of all tickets sold</span></div>
<div class="c" style="left:666px;width:300px;top:362.51px;height:15.30px"><span>Measures the total number of tickets sold for the event.</span></div>
<div class="c" style="left:966px;width:55px;top:362.51px;height:15.30px"><span>UTB</span></div>
<div class="rh" style="top:377.81px;height:15.30px">14</div>
<div class="c" style="left:20px;width:52px;top:377.81px;height:15.30px"><span>13</span></div>
<div class="c" style="left:72px;width:100px;top:377.81px;height:15.30px"><span>Satisfaction</span></div>
<div class="c" style="left:172px;width:138px;top:377.81px;height:15.30px"><span>Event Satisfaction Rate</span></div>
<div class="c" style="left:310px;width:100px;top:377.81px;height:15.30px"><span>(%)</span></div>
<div class="c" style="left:410px;width:256px;top:377.81px;height:15.30px"><span>(Satisfied Attendees / Total Attendees) * 100</span></div>
<div class="c" style="left:666px;width:300px;top:377.81px;height:15.30px"><span>Tracks the percentage of satisfied attendees.</span></div>
<div class="c" style="left:966px;width:55px;top:377.81px;height:15.30px"><span>UTB</span></div>
<div class="rh" style="top:393.10px;height:15.30px">15</div>
<div class="c" style="left:20px;width:52px;top:393.10px;height:15.30px"><span>14</span></div>
<div class="c" style="left:72px;width:100px;top:393.10px;height:15.30px"><span>Satisfaction</span></div>
<div class="c" style="left:172px;width:138px;top:393.10px;height:15.30px"><span>Speaker/Performer Rating</span></div>
<div class="c" style="left:310px;width:100px;top:393.10px;height:15.30px"><span>Rating</span></div>
<div class="c" style="left:410px;width:256px;top:393.10px;height:15.30px"><span>Average rating given by attendees</span></div>
<div class="c" style="left:666px;width:300px;top:393.10px;height:15.30px"><span>Tracks the average rating given to speakers or performers.</span></div>
<div class="c" style="left:966px;width:55px;top:393.10px;height:15.30px"><span>UTB</span></div>
<div class="rh" style="top:408.40px;height:15.30px">16</div>
<div class="c" style="left:20px;width:52px;top:408.40px;height:15.30px"><span>15</span></div>
<div class="c" style="left:72px;width:100px;top:408.40px;height:15.30px"><span>Satisfaction</span></div>
<div class="c" style="left:172px;width:138px;top:408.40px;height:15.30px"><span>Repeat Attendee Rate</span></div>
<div class="c" style="left:310px;width:100px;top:408.40px;height:15.30px"><span>(%)</span></div>
<div class="c" style="left:410px;width:256px;top:408.40px;height:15.30px"><span>(Repeat Attendees / Total Attendees) * 100</span></div>
<div class="c" style="left:666px;width:300px;top:408.40px;height:15.30px"><span>Measures the percentage of repeat attendees.</span></div>
<div class="c" style="left:966px;width:55px;top:408.40px;height:15.30px"><span>UTB</span></div>
<div class="rh" style="top:423.70px;height:15.30px">17</div>
<div class="c" style="left:20px;width:52px;top:423.70px;height:15.30px"><span>16</span></div>
<div class="c" style="left:72px;width:100px;top:423.70px;height:15.30px"><span>Sponsorship</span></div>
<div class="c" style="left:172px;width:138px;top:423.70px;height:15.30px"><span>Sponsor Satisfaction Rate</span></div>
<div class="c" style="left:310px;width:100px;top:423.70px;height:15.30px"><span>(%)</span></div>
<div class="c" style="left:410px;width:256px;top:423.70px;height:15.30px"><span>(Satisfied Sponsors / Total Sponsors) * 100</span></div>
<div class="c" style="left:666px;width:300px;top:423.70px;height:15.30px"><span>Tracks the percentage of satisfied sponsors.</span></div>
<div class="c" style="left:966px;width:55px;top:423.70px;height:15.30px"><span>UTB</span></div>
<div class="rh" style="top:438.99px;height:15.30px">18</div>
<div class="hl" style="top:178.96px;background:#efe2f7"></div>
<div class="hl" style="top:194.26px;background:#efe2f7"></div>
<div class="hl" style="top:209.55px"></div>
<div class="hl" style="top:224.85px"></div>
<div class="hl" style="top:240.14px"></div>
<div class="hl" style="top:255.44px"></div>
<div class="hl" style="top:270.74px"></div>
<div class="hl" style="top:286.03px"></div>
<div class="hl" style="top:301.33px"></div>
<div class="hl" style="top:316.62px"></div>
<div class="hl" style="top:331.92px"></div>
<div class="hl" style="top:347.22px"></div>
<div class="hl" style="top:362.51px"></div>
<div class="hl" style="top:377.81px"></div>
<div class="hl" style="top:393.10px"></div>
<div class="hl" style="top:408.40px"></div>
<div class="hl" style="top:423.70px"></div>
<div class="hl" style="top:438.99px"></div>
<div class="hl" style="top:454.29px"></div>
<div class="vl" style="left:20px"></div>
<div class="vl" style="left:72px"></div>
<div class="vl" style="left:172px"></div>
<div class="vl" style="left:310px"></div>
<div class="vl" style="left:410px"></div>
<div class="vl" style="left:666px"></div>
<div class="vl" style="left:966px"></div>
<div class="vl" style="left:1021px"></div>
<div class="a" style="left:0;top:454.6px;width:1024px;height:2px;background:#e2e0ea"></div>
<svg class="a" style="left:0;top:160px" width="22" height="20" viewBox="0 160 22 20"><path d="M8 176 L18 164.5 V176Z" fill="#e6e6e6"/><path d="M20.3 164 V179" stroke="#a8a8a8" stroke-width="1"/></svg>
<div class="a" style="left:20px;top:439px;width:1px;height:15px;background:#b8dfe6"></div><div class="a" style="left:71.5px;top:439px;width:1px;height:15px;background:#b8dfe6"></div>
<div class="a" style="left:19.5px;top:178.3px;width:53.5px;height:17.5px;border:1.6px solid #34604a;box-shadow:inset 0 0 0 1px #cdbde6"></div>
<div class="a" style="left:70.5px;top:192.8px;width:3.5px;height:3.5px;background:#2a4236"></div>
<svg class="a" style="left:22px;top:181px" width="13" height="13" viewBox="0 0 13 13"><path d="M1 6.5 L6.5 1.5 L12 6.5" fill="none" stroke="#d9e6fb" stroke-width="1.3"/><path d="M2.5 6 L6.5 2.6 L10.5 6 V12.5 H2.5Z" fill="#dce8fb"/><rect x="5.6" y="9" width="1.8" height="3.5" fill="#6b4a9a"/><rect x="3.4" y="8" width="1.3" height="1.3" fill="#6b4a9a"/><rect x="8.3" y="8" width="1.3" height="1.3" fill="#6b4a9a"/></svg>
</div>
</body></html>
